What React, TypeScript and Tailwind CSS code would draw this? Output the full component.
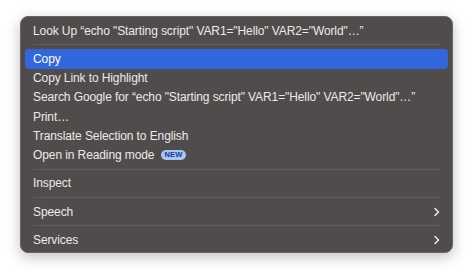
import React from "react";

const Sep = () => (
  <div className="h-[9.2px] flex items-center px-3">
    <div className="h-px w-full bg-[#625d5d]" />
  </div>
);

const Chevron = () => (
  <svg width="8" height="10" viewBox="0 0 8 10" className="mr-[-1px]">
    <path d="M2 1.5 L5.5 5 L2 8.5" fill="none" stroke="#e8e6e6" strokeWidth="1.6" strokeLinecap="round" strokeLinejoin="round" />
  </svg>
);

const Item = ({ children, active, sub }: { children: React.ReactNode; active?: boolean; sub?: boolean }) => (
  <div
    className={`h-[19.2px] mx-1 px-2 rounded-[4px] flex items-center justify-between whitespace-nowrap ${
      active ? "bg-[#3166dc]" : ""
    }`}
  >
    <div className="flex items-center">{children}</div>
    {sub && <Chevron />}
  </div>
);

export default function App() {
  const q = "“echo \"Starting script\" VAR1=\"Hello\" VAR2=\"World\"…”";
  return (
    <div className="w-[474px] h-[277px] bg-white pt-4 pl-5">
      <div
        className="w-[433px] h-[237px] rounded-[8px] bg-[#514c4c] pt-[4px] text-[#ebe9e9] text-[12px] tracking-[-0.1px] leading-none shadow-[0_4px_14px_rgba(0,0,0,0.25)] border border-[#6a6565]"
        style={{ fontFamily: "'Liberation Sans', Arial, sans-serif" }}
      >
        <Item>Look Up {q}</Item>
        <Sep />
        <Item active>
          <span className="text-white">Copy</span>
        </Item>
        <Item>Copy Link to Highlight</Item>
        <Item>Search Google for {q}</Item>
        <Item>Print…</Item>
        <Item>Translate Selection to English</Item>
        <Item>
          Open in Reading mode
          <span className="ml-[7px] h-[10px] px-[3px] rounded-full bg-[#a9c5f5] text-[#123d8c] text-[7.5px] font-bold flex items-center tracking-[0.2px]">
            NEW
          </span>
        </Item>
        <Sep />
        <Item>Inspect</Item>
        <Sep />
        <Item sub>Speech</Item>
        <Sep />
        <Item sub>Services</Item>
      </div>
    </div>
  );
}
